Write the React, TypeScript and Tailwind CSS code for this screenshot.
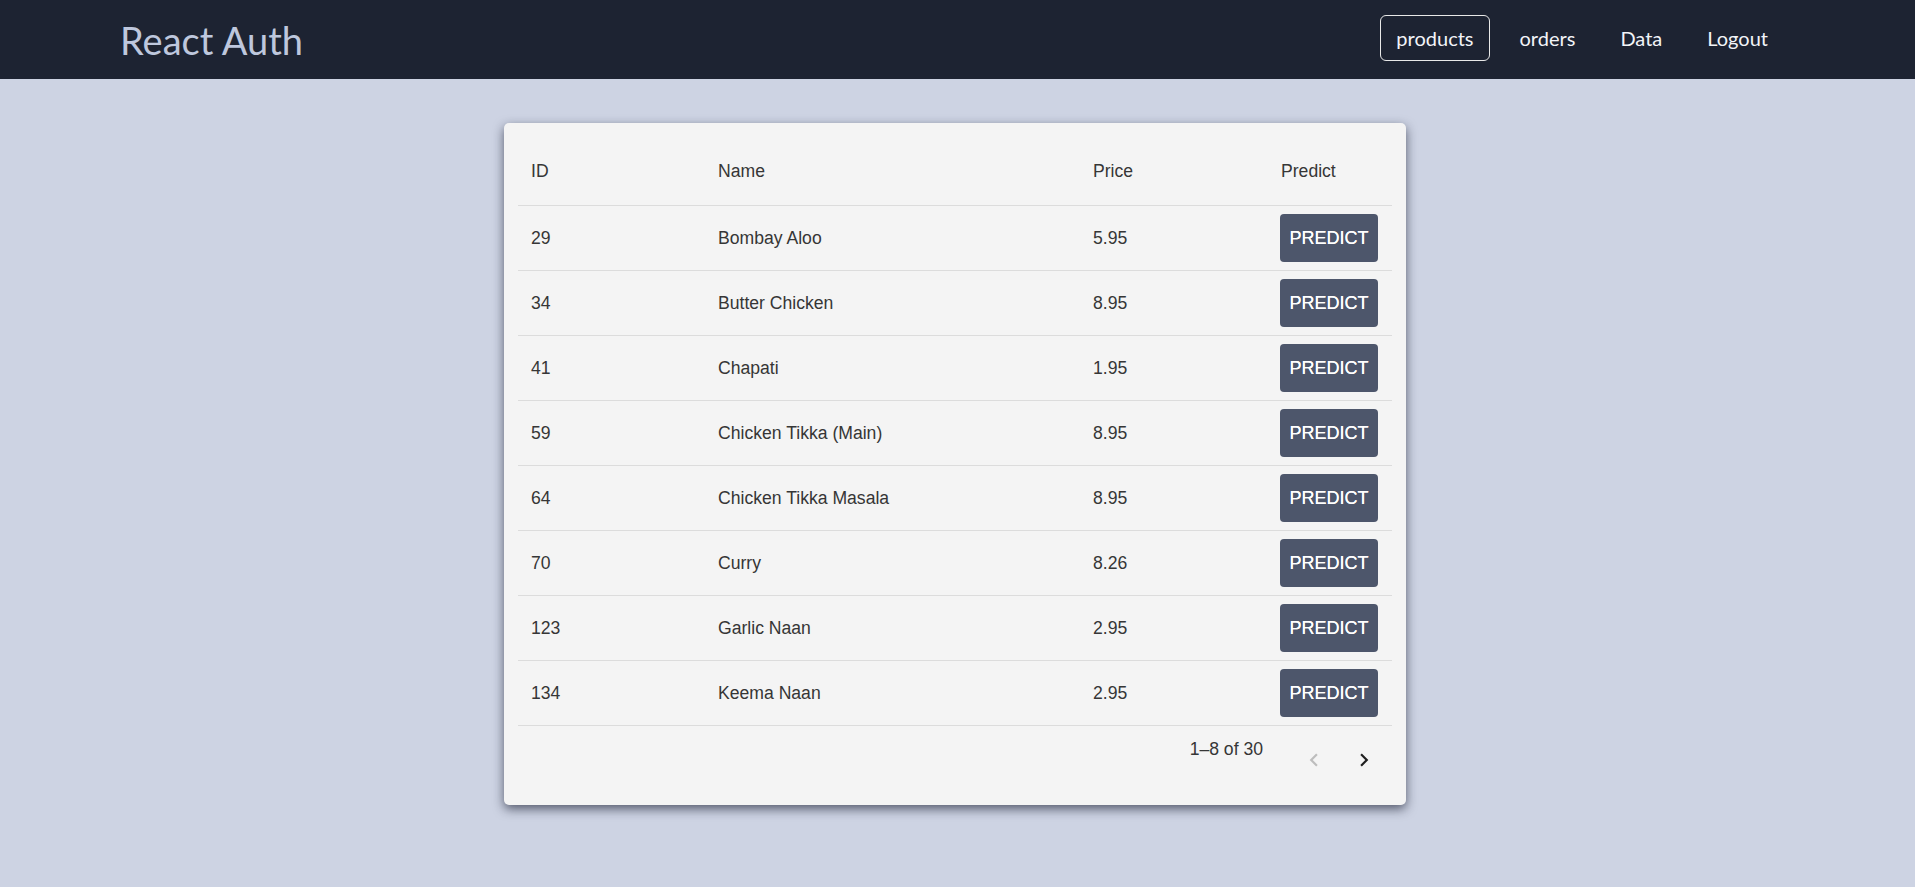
import React from "react";

const rows = [
  { id: 29, name: "Bombay Aloo", price: "5.95" },
  { id: 34, name: "Butter Chicken", price: "8.95" },
  { id: 41, name: "Chapati", price: "1.95" },
  { id: 59, name: "Chicken Tikka (Main)", price: "8.95" },
  { id: 64, name: "Chicken Tikka Masala", price: "8.95" },
  { id: 70, name: "Curry", price: "8.26" },
  { id: 123, name: "Garlic Naan", price: "2.95" },
  { id: 134, name: "Keema Naan", price: "2.95" },
];

export default function App() {
  return (
    <div className="min-h-[887px] w-full bg-[#cdd3e3]">
      <header className="flex h-[79px] items-center justify-between bg-[#1d2332] pl-[120px] pr-[132px]">
        <div className="font-['Lato','Noto_Sans',sans-serif] text-[38px] leading-none text-[#bec7dd]">
          React Auth
        </div>
        <nav className="mb-[3px] flex items-center gap-[15px] font-['Lato','Noto_Sans',sans-serif] text-[20px] text-[#f2f4f8]">
          <a className="flex h-[46px] items-center rounded-[6px] border border-[#e8e8e8] px-[15px]">products</a>
          <a className="flex h-[46px] items-center px-[15px]">orders</a>
          <a className="flex h-[46px] items-center px-[15px]">Data</a>
          <a className="flex h-[46px] items-center px-[15px]">Logout</a>
        </nav>
      </header>

      <div className="ml-[504px] mt-[44px] w-[902px] rounded-[5px] bg-[#f4f4f4] px-[14px] pb-[14px] pt-[15px] shadow-[0_4px_11px_rgba(20,25,45,0.65)] font-['Liberation_Sans','Arial',sans-serif] text-[17.6px] text-[#363636]">
        <div className="grid h-[68px] grid-cols-[187px_375px_188px_125px] items-center border-b border-[#dcdcdc]">
          <div className="pl-[13px]">ID</div>
          <div className="pl-[13px]">Name</div>
          <div className="pl-[13px]">Price</div>
          <div className="pl-[13px]">Predict</div>
        </div>
        {rows.map((r) => (
          <div
            key={r.id}
            className="grid h-[65px] grid-cols-[187px_375px_188px_125px] items-center border-b border-[#dcdcdc]"
          >
            <div className="pl-[13px]">{r.id}</div>
            <div className="pl-[13px]">{r.name}</div>
            <div className="pl-[13px]">{r.price}</div>
            <div className="pl-[12px]">
              <button className="flex h-[48px] w-[98px] items-center justify-center rounded-[4px] bg-[#4d566b] text-[18px] text-white [text-shadow:0_0_0.4px_#ffffff]">
                PREDICT
              </button>
            </div>
          </div>
        ))}
        <div className="flex h-[65px] items-start justify-end pr-[4px]">
          <div className="mt-[11px] leading-[24px]">1–8 of 30</div>
          <button className="ml-[27px] mt-[10px] flex h-[48px] w-[48px] items-center justify-center">
            <svg width="26" height="26" viewBox="0 0 24 24" fill="#bdbdbd">
              <path d="M15.41 7.41 14 6l-6 6 6 6 1.41-1.41L10.83 12z" />
            </svg>
          </button>
          <button className="ml-[2px] mt-[10px] flex h-[48px] w-[48px] items-center justify-center">
            <svg width="26" height="26" viewBox="0 0 24 24" fill="#1f1f1f">
              <path d="M10 6 8.59 7.41 13.17 12l-4.58 4.59L10 18l6-6z" />
            </svg>
          </button>
        </div>
      </div>
    </div>
  );
}
